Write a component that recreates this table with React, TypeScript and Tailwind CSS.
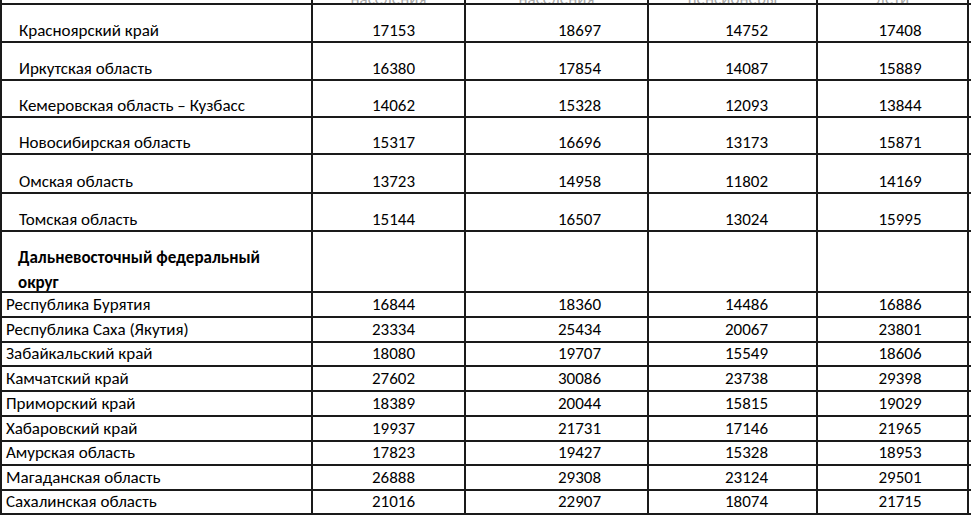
type Row = {
  name: string;
  values: string[];
  h: string;
};

const upper: Row[] = [
  { name: "Красноярский край", values: ["17153", "18697", "14752", "17408"], h: "h-[38px]" },
  { name: "Иркутская область", values: ["16380", "17854", "14087", "15889"], h: "h-[38px]" },
  { name: "Кемеровская область – Кузбасс", values: ["14062", "15328", "12093", "13844"], h: "h-[37px]" },
  { name: "Новосибирская область", values: ["15317", "16696", "13173", "15871"], h: "h-[37px]" },
  { name: "Омская область", values: ["13723", "14958", "11802", "14169"], h: "h-[39px]" },
  { name: "Томская область", values: ["15144", "16507", "13024", "15995"], h: "h-[38px]" },
];

const lower: Row[] = [
  { name: "Республика Бурятия", values: ["16844", "18360", "14486", "16886"], h: "h-[25px]" },
  { name: "Республика Саха (Якутия)", values: ["23334", "25434", "20067", "23801"], h: "h-[25px]" },
  { name: "Забайкальский край", values: ["18080", "19707", "15549", "18606"], h: "h-[24px]" },
  { name: "Камчатский край", values: ["27602", "30086", "23738", "29398"], h: "h-[25px]" },
  { name: "Приморский край", values: ["18389", "20044", "15815", "19029"], h: "h-[25px]" },
  { name: "Хабаровский край", values: ["19937", "21731", "17146", "21965"], h: "h-[25px]" },
  { name: "Амурская область", values: ["17823", "19427", "15328", "18953"], h: "h-[24px]" },
  { name: "Магаданская область", values: ["26888", "29308", "23124", "29501"], h: "h-[25px]" },
  { name: "Сахалинская область", values: ["21016", "22907", "18074", "21715"], h: "h-[24px]" },
];

// numbers sit a bit right of the column centre in the source document
const valuePad = ["pl-[10px]", "pl-[46px]", "pl-[28px]", "pl-[15px]"];

const grid = "grid grid-cols-[313px_153px_183px_169px_151px] border-b-2 border-[#1a1a1a]";
const cell = "border-r-2 border-[#1a1a1a] flex";

export default function App() {
  return (
    <div className="w-[971px] h-[515px] overflow-hidden bg-white text-black text-[17px] font-['Carlito','Liberation_Sans',sans-serif]">
      {/* header row, mostly scrolled out of view */}
      <div className={`${grid} h-[5px]`}>
        <div className={`${cell} border-l-2 overflow-hidden`} />
        {["населения", "населения", "пенсионеры", "дети"].map((t, i) => (
          <div key={i} className={`${cell} overflow-hidden items-end justify-center`}>
            <span className="leading-[17px] -mb-[4px] text-[#aaa]">{t}</span>
          </div>
        ))}
      </div>

      {upper.map((r) => (
        <div key={r.name} className={`${grid} ${r.h}`}>
          <div className={`${cell} border-l-2 items-end pl-[17px] leading-[20px]`}>{r.name}</div>
          {r.values.map((v, i) => (
            <div key={i} className={`${cell} items-end justify-center leading-[20px] ${valuePad[i]}`}>
              {v}
            </div>
          ))}
        </div>
      ))}

      <div className={`${grid} h-[61px]`}>
        <div className={`${cell} border-l-2 items-end pl-[16px]`}>
          <div className="font-bold leading-[25px] -mb-[4px]">
            Дальневосточный федеральный
            <br />
            округ
          </div>
        </div>
        <div className={cell} />
        <div className={cell} />
        <div className={cell} />
        <div className={cell} />
      </div>

      {lower.map((r) => (
        <div key={r.name} className={`${grid} ${r.h}`}>
          <div className={`${cell} border-l-2 items-center pl-[4px] leading-[20px]`}>{r.name}</div>
          {r.values.map((v, i) => (
            <div key={i} className={`${cell} items-center justify-center leading-[20px] ${valuePad[i]}`}>
              {v}
            </div>
          ))}
        </div>
      ))}
    </div>
  );
}
